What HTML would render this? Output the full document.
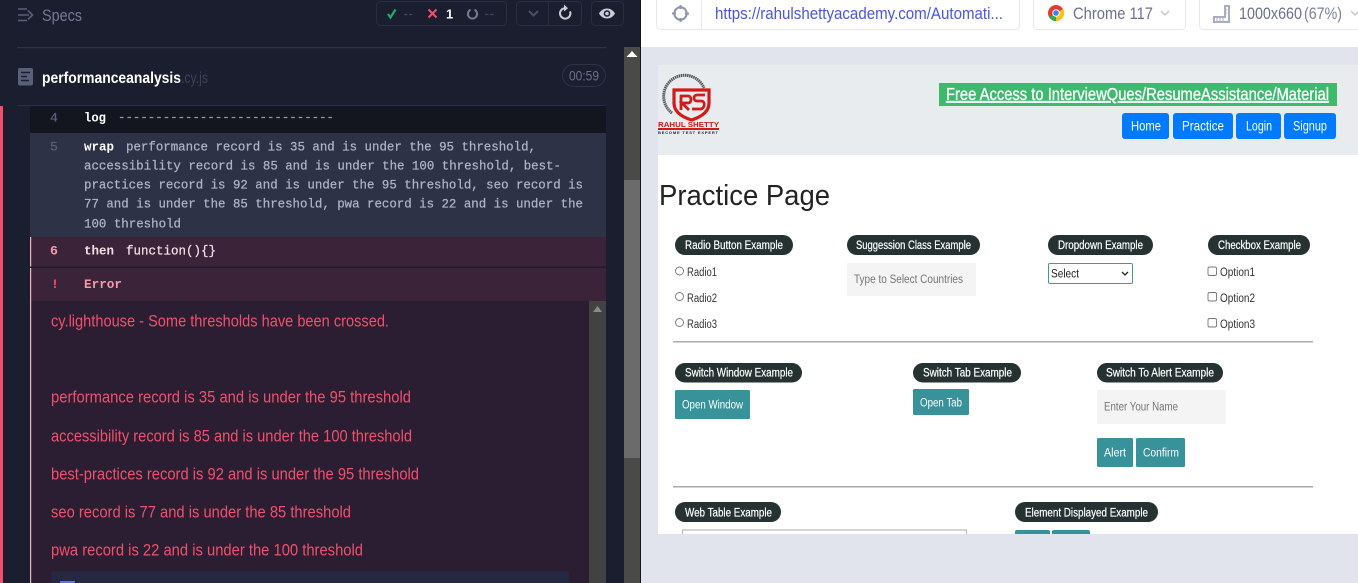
<!DOCTYPE html>
<html><head><meta charset="utf-8"><title>Specs</title>
<style>
html,body{margin:0;padding:0;background:#fff;overflow:hidden;width:1358px;height:583px}
svg{display:block}
.s{font-family:"Liberation Sans",sans-serif}
.m{font-family:"Liberation Mono",monospace;font-size:13.2px;stroke-width:.25px}
.b{font-weight:bold}
.p{font-family:"Liberation Sans",sans-serif;font-size:11.500px;fill:#fff;stroke:#fff;stroke-width:.2px}
.l{font-family:"Liberation Sans",sans-serif;font-size:11.500px;fill:#333}
.t{font-family:"Liberation Sans",sans-serif;font-size:16.500px;fill:#f1506b}
</style></head><body>
<svg width="1358" height="583" viewBox="0 0 1358 583" xmlns="http://www.w3.org/2000/svg">
<rect width="640" height="583" fill="#1b1e2e"/>
<rect x="640" width="1.5" height="583" fill="#15161c"/>
<rect x="641" width="717" height="47" fill="#fff"/>
<rect x="641" y="47" width="717" height="536" fill="#e1e4ed"/>

<!-- top bar -->
<g fill="none" stroke="#5a5f7a" stroke-width="1.6"><path d="M18 9h9M18 15h11M18 20.500h9M28 10.500l4.500 4.500-4.500 4.500"/></g>
<text x="42" y="21" class="s" font-size="17" fill="#747994" textLength="40" lengthAdjust="spacingAndGlyphs">Specs</text>
<rect x="376.500" y="1.500" width="130" height="24" rx="4" fill="none" stroke="#2a2e42"/>
<path d="M388 14l2.500 3.500 5-8" fill="none" stroke="#1fa971" stroke-width="2.200"/>
<path d="M404 14.500h3.500M409 14.500h3.500M485 14.500h3.500M490 14.500h3.500" stroke="#3f4460" stroke-width="1.300"/>
<path d="M428.500 9.500l8 8M436.500 9.500l-8 8" stroke="#f1506b" stroke-width="2"/>
<text x="446" y="18.500" class="s" font-size="13" font-weight="bold" fill="#fff">1</text>
<path d="M470.500 9.800a4.600 4.600 0 1 0 4 0" fill="none" stroke="#747994" stroke-width="2"/>
<rect x="516.500" y="1.500" width="65" height="24" rx="4" fill="none" stroke="#2a2e42"/>
<path d="M548.500 2v23" stroke="#2a2e42"/>
<path d="M529 11l4.500 4.500 4.500-4.500" fill="none" stroke="#4b5068" stroke-width="2"/>
<path d="M565 8.200a5.200 5.200 0 1 0 5 3.200" fill="none" stroke="#c9cbd9" stroke-width="2"/><path d="M564 4.500l4 3.700-4 3.300z" fill="#c9cbd9"/>
<rect x="591.500" y="1.500" width="32" height="24" rx="4" fill="none" stroke="#2a2e42"/>
<path d="M599 15.500c2-3.500 5-5 8-5s6 1.500 8 5c-2 3.500-5 5-8 5s-6-1.500-8-5z" fill="#c9cbd9" transform="translate(0 -2)"/>
<circle cx="607" cy="13.500" r="3.300" fill="#1b1e2e"/><circle cx="607" cy="13.500" r="1.800" fill="#c9cbd9"/>
<rect x="17" y="47" width="589" height="1.200" fill="#2e3247"/>

<!-- file row -->
<rect x="18" y="68" width="15" height="17.500" rx="2" fill="#5a5f7a"/>
<path d="M21 72.500h9M21 76.500h6M21 80.500h8" stroke="#1b1e2e" stroke-width="1.500"/>
<text x="42" y="83" class="s b" font-size="16" fill="#fff" textLength="139" lengthAdjust="spacingAndGlyphs">performanceanalysis</text>
<text x="181" y="83" class="s" font-size="16" fill="#3e4258" textLength="27" lengthAdjust="spacingAndGlyphs">.cy.js</text>
<rect x="562.500" y="64.500" width="43" height="22" rx="11" fill="none" stroke="#2e3247"/>
<text x="569" y="80.500" class="s" font-size="14" fill="#6d728c" textLength="30" lengthAdjust="spacingAndGlyphs">00:59</text>
<rect x="17" y="105" width="589" height="1.200" fill="#2a2e42"/>

<!-- log rows -->
<rect x="0" y="106" width="3" height="477" fill="#f1506b"/>
<rect x="30" y="106" width="576" height="27" fill="#14161f"/>
<rect x="30" y="133" width="576" height="104" fill="#2e3247"/>
<rect x="30" y="237" width="576" height="29.500" fill="#3b2339"/>
<rect x="30" y="268" width="576" height="33" fill="#3b2339"/>
<rect x="30" y="301" width="576" height="282" fill="#2b1e33"/>
<rect x="30" y="237" width="1.200" height="29.500" fill="#f5b0bd"/>
<rect x="30" y="268" width="1.200" height="315" fill="#f5b0bd"/>
<text x="50" y="121.500" class="m" fill="#5a5f7a" stroke="#5a5f7a">4</text>
<text x="84" y="121.500" class="m b" fill="#fff" textLength="22" lengthAdjust="spacingAndGlyphs">log</text>
<text x="118" y="121" class="m" fill="#9095ad" stroke="#9095ad" textLength="216" lengthAdjust="spacingAndGlyphs">-----------------------------</text>
<text x="50" y="150.500" class="m" fill="#5a5f7a" stroke="#5a5f7a">5</text>
<text x="84" y="150.500" class="m b" fill="#fff" textLength="30" lengthAdjust="spacingAndGlyphs">wrap</text>
<g class="m" fill="#afb3c7" stroke="#afb3c7">
<text x="126" y="150.500" textLength="410" lengthAdjust="spacingAndGlyphs">performance record is 35 and is under the 95 threshold,</text>
<text x="84" y="169.500" textLength="477" lengthAdjust="spacingAndGlyphs">accessibility record is 85 and is under the 100 threshold, best-</text>
<text x="84" y="188.500" textLength="499" lengthAdjust="spacingAndGlyphs">practices record is 92 and is under the 95 threshold, seo record is</text>
<text x="84" y="207.500" textLength="499" lengthAdjust="spacingAndGlyphs">77 and is under the 85 threshold, pwa record is 22 and is under the</text>
<text x="84" y="227.500" textLength="97" lengthAdjust="spacingAndGlyphs">100 threshold</text>
</g>
<text x="50" y="254.500" class="m b" fill="#f59aa9">6</text>
<text x="84" y="254.500" class="m b" fill="#f3dfe4" textLength="30" lengthAdjust="spacingAndGlyphs">then</text>
<text x="126" y="254.500" class="m" fill="#f3dfe4" stroke="#f3dfe4" textLength="90" lengthAdjust="spacingAndGlyphs">function(){}</text>
<text x="51" y="288" class="m b" fill="#f1506b">!</text>
<text x="84" y="288" class="m b" fill="#f59aa9" textLength="38" lengthAdjust="spacingAndGlyphs">Error</text>

<text x="51" y="326.500" class="t" textLength="338" lengthAdjust="spacingAndGlyphs">cy.lighthouse - Some thresholds have been crossed.</text>
<text x="51" y="402.500" class="t" textLength="360" lengthAdjust="spacingAndGlyphs">performance record is 35 and is under the 95 threshold</text>
<text x="51" y="441.500" class="t" textLength="361" lengthAdjust="spacingAndGlyphs">accessibility record is 85 and is under the 100 threshold</text>
<text x="51" y="479.500" class="t" textLength="368" lengthAdjust="spacingAndGlyphs">best-practices record is 92 and is under the 95 threshold</text>
<text x="51" y="517.500" class="t" textLength="300" lengthAdjust="spacingAndGlyphs">seo record is 77 and is under the 85 threshold</text>
<text x="51" y="555.500" class="t" textLength="312" lengthAdjust="spacingAndGlyphs">pwa record is 22 and is under the 100 threshold</text>
<rect x="51" y="571" width="518" height="14" rx="3" fill="#252840"/>
<rect x="60" y="581" width="15" height="4" rx="1" fill="#6470f3"/>
<rect x="589" y="301" width="17" height="282" fill="#424242"/>
<path d="M597.500 306l4.500 6h-9z" fill="#8a8a8a"/>
<rect x="624" y="47" width="16" height="536" fill="#4a4a48"/>
<rect x="624" y="180" width="16" height="278" fill="#6b6b6b"/>
<path d="M632 51l5.500 6h-11z" fill="#fff"/>

<!-- cy toolbar -->
<g fill="#fff" stroke="#e6e8f0">
<rect x="656.500" y="-3" width="363" height="32.500" rx="4"/>
<rect x="1033.500" y="-3" width="152" height="32.500" rx="4"/>
<rect x="1199.500" y="-3" width="170" height="32.500" rx="4"/>
</g>
<path d="M701.500 0v29" stroke="#e6e8f0"/>
<g fill="none" stroke="#8f94ad" stroke-width="2"><circle cx="680.500" cy="13.500" r="6.200"/><path d="M680.500 5v4M680.500 18v4M672 13.500h4M685 13.500h4"/></g>
<text x="715" y="19" class="s" font-size="17" fill="#4956e3" textLength="288" lengthAdjust="spacingAndGlyphs">https://rahulshettyacademy.com/Automati...</text>
<circle cx="1056" cy="13" r="8" fill="#e33b2e"/>
<path d="M1056 13l-7 4a8 8 0 0 0 7 4z" fill="#2da94f"/><path d="M1056 13v8a8 8 0 0 0 7-12z" fill="#fbc116"/>
<circle cx="1056" cy="13" r="3.800" fill="#fff"/><circle cx="1056" cy="13" r="2.800" fill="#3f7fe9"/>
<text x="1073" y="19" class="s" font-size="17" fill="#6b7090" textLength="80" lengthAdjust="spacingAndGlyphs">Chrome 117</text>
<path d="M1161 11l4 4 4-4" fill="none" stroke="#bfc3d4" stroke-width="1.300"/>
<path d="M1225 6h4v16h-15v-5h11z" fill="none" stroke="#a9adc1" stroke-width="2"/>
<path d="M1217 18v3M1220 18v3M1223 18v3M1225 10h2M1225 13h2" stroke="#a9adc1"/>
<text x="1239" y="19" class="s" font-size="17" fill="#6b7090" textLength="63" lengthAdjust="spacingAndGlyphs">1000x660</text>
<text x="1304" y="19" class="s" font-size="17" fill="#7d829c" textLength="38" lengthAdjust="spacingAndGlyphs">(67%)</text>
<path d="M1351 11l4 4 4-4" fill="none" stroke="#bfc3d4" stroke-width="1.300"/>

<!-- page -->
<rect x="658" y="65" width="700" height="469" fill="#fff"/>
<rect x="658" y="65" width="700" height="90" fill="#e9ecef"/>
<!-- logo -->
<path d="M672 113A21 21 0 1 1 704 88" fill="none" stroke="#55585c" stroke-width="3" stroke-dasharray="1.500 .6"/>
<path d="M674 90h35v13c0 9-8 14-17.500 17C682 117 674 112 674 103z" fill="#e9ecef" stroke="#d11a1a" stroke-width="3.200"/>
<path d="M681 110V96h7c4 0 4 7 0 7h-6l7 7" fill="none" stroke="#d11a1a" stroke-width="2.800"/>
<path d="M705 95h-8c-4 0-4 6 0 6h4c5 0 4 8-1 8h-8" fill="none" stroke="#d11a1a" stroke-width="2.800"/>
<text x="658" y="127" class="s b" font-size="7.500" fill="#d11a1a" textLength="61" lengthAdjust="spacingAndGlyphs">RAHUL SHETTY</text>
<rect x="658" y="128" width="61" height="2" fill="#d11a1a"/>
<text x="658" y="134" class="s b" font-size="4" fill="#222" textLength="60" lengthAdjust="spacing">BECOME TEST EXPERT</text>

<rect x="939" y="83" width="398" height="23" fill="#3dba6c"/>
<text x="946" y="100" class="s" font-size="17.500" fill="#fff" stroke="#fff" stroke-width=".35" text-decoration="underline" textLength="383" lengthAdjust="spacingAndGlyphs">Free Access to InterviewQues/ResumeAssistance/Material</text>
<g fill="#007bff">
<rect x="1122" y="113" width="47" height="26" rx="3"/>
<rect x="1173" y="113" width="60" height="26" rx="3"/>
<rect x="1236" y="113" width="45" height="26" rx="3"/>
<rect x="1284" y="113" width="52" height="26" rx="3"/>
</g>
<g class="s" font-size="14" fill="#fff">
<text x="1131" y="130.500" textLength="30" lengthAdjust="spacingAndGlyphs">Home</text>
<text x="1182" y="130.500" textLength="42" lengthAdjust="spacingAndGlyphs">Practice</text>
<text x="1246" y="130.500" textLength="26" lengthAdjust="spacingAndGlyphs">Login</text>
<text x="1293" y="130.500" textLength="34" lengthAdjust="spacingAndGlyphs">Signup</text>
</g>
<text x="659" y="205" class="s" font-size="29" fill="#222" textLength="171" lengthAdjust="spacingAndGlyphs">Practice Page</text>

<!-- pills -->
<g fill="#263232">
<rect x="675" y="235" width="118" height="20" rx="10"/>
<rect x="847" y="235" width="133" height="20" rx="10"/>
<rect x="1048" y="235" width="105" height="20" rx="10"/>
<rect x="1208" y="235" width="102" height="20" rx="10"/>
<rect x="675" y="363" width="127" height="19.500" rx="10"/>
<rect x="913" y="363" width="108" height="19.500" rx="10"/>
<rect x="1097" y="363" width="126" height="19.500" rx="10"/>
<rect x="675" y="502" width="106" height="20" rx="10"/>
<rect x="1015" y="502" width="143" height="20" rx="10"/>
</g>
<text x="685" y="249" class="p" textLength="98" lengthAdjust="spacingAndGlyphs">Radio Button Example</text>
<text x="856" y="249" class="p" textLength="115" lengthAdjust="spacingAndGlyphs">Suggession Class Example</text>
<text x="1058" y="249" class="p" textLength="85" lengthAdjust="spacingAndGlyphs">Dropdown Example</text>
<text x="1218" y="249" class="p" textLength="83" lengthAdjust="spacingAndGlyphs">Checkbox Example</text>
<text x="685" y="376.500" class="p" textLength="108" lengthAdjust="spacingAndGlyphs">Switch Window Example</text>
<text x="923" y="376.500" class="p" textLength="89" lengthAdjust="spacingAndGlyphs">Switch Tab Example</text>
<text x="1106" y="376.500" class="p" textLength="108" lengthAdjust="spacingAndGlyphs">Switch To Alert Example</text>
<text x="685" y="516.500" class="p" textLength="87" lengthAdjust="spacingAndGlyphs">Web Table Example</text>
<text x="1025" y="516.500" class="p" textLength="123" lengthAdjust="spacingAndGlyphs">Element Displayed Example</text>

<!-- row 1 -->
<g fill="#fff" stroke="#777" stroke-width=".9">
<circle cx="679.500" cy="271" r="4"/><circle cx="679.500" cy="296.500" r="4"/><circle cx="679.500" cy="322.500" r="4"/>
<rect x="1208" y="267" width="8.500" height="8.500" rx="1.500"/><rect x="1208" y="292.500" width="8.500" height="8.500" rx="1.500"/><rect x="1208" y="318.500" width="8.500" height="8.500" rx="1.500"/>
</g>
<text x="687" y="276" class="l" textLength="30" lengthAdjust="spacingAndGlyphs">Radio1</text>
<text x="687" y="302" class="l" textLength="30" lengthAdjust="spacingAndGlyphs">Radio2</text>
<text x="687" y="328" class="l" textLength="30" lengthAdjust="spacingAndGlyphs">Radio3</text>
<text x="1220" y="276" class="l" textLength="35" lengthAdjust="spacingAndGlyphs">Option1</text>
<text x="1220" y="302" class="l" textLength="35" lengthAdjust="spacingAndGlyphs">Option2</text>
<text x="1220" y="328" class="l" textLength="35" lengthAdjust="spacingAndGlyphs">Option3</text>
<rect x="847" y="263" width="129" height="33" fill="#f4f4f4"/>
<text x="854" y="283" class="s" font-size="11.500" fill="#757575" textLength="109" lengthAdjust="spacingAndGlyphs">Type to Select Countries</text>
<rect x="1048.500" y="263.500" width="84" height="20" rx="1.500" fill="#fff" stroke="#3a9aa0"/>
<text x="1051" y="277.500" class="s" font-size="11.500" fill="#222" textLength="28" lengthAdjust="spacingAndGlyphs">Select</text>
<path d="M1122 272l3 3 3-3" fill="none" stroke="#222" stroke-width="1.300"/>
<rect x="673" y="341" width="640" height="1.500" fill="#aaa"/>

<!-- row 2 -->
<g fill="#37929a">
<rect x="675" y="390" width="75" height="29" rx="1.500"/>
<rect x="913" y="389" width="56" height="26" rx="1.500"/>
<rect x="1097" y="438" width="36" height="29" rx="1.500"/>
<rect x="1136" y="438" width="49" height="29" rx="1.500"/>
</g>
<g class="s" font-size="11.500" fill="#fff">
<text x="682" y="408.500" textLength="61" lengthAdjust="spacingAndGlyphs">Open Window</text>
<text x="920" y="406.500" textLength="42" lengthAdjust="spacingAndGlyphs">Open Tab</text>
<text x="1104" y="456.500" textLength="22" lengthAdjust="spacingAndGlyphs">Alert</text>
<text x="1143" y="456.500" textLength="36" lengthAdjust="spacingAndGlyphs">Confirm</text>
</g>
<rect x="1097" y="390" width="129" height="34" fill="#f4f4f4"/>
<text x="1104" y="410.500" class="s" font-size="11.500" fill="#757575" textLength="74" lengthAdjust="spacingAndGlyphs">Enter Your Name</text>
<rect x="673" y="486" width="640" height="1.500" fill="#aaa"/>

<!-- row 3 -->
<path d="M682.500 534v-4h284v4" fill="none" stroke="#bbb" stroke-width="1.200"/>
<path d="M1015 534v-2a2 2 0 0 1 2-2h31a2 2 0 0 1 2 2v2zM1052 534v-2a2 2 0 0 1 2-2h34a2 2 0 0 1 2 2v2z" fill="#37929a"/>
</svg>
</body></html>
